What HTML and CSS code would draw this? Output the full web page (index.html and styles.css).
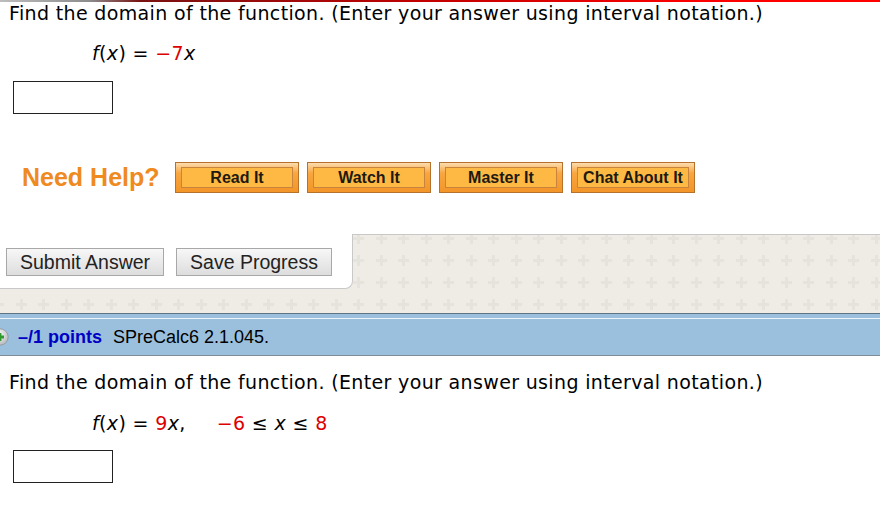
FILE: index.html
```html
<!DOCTYPE html>
<html lang="en">
<head>
  <meta charset="UTF-8">
  <title>Domain of a Function</title>
  <link rel="stylesheet" href="styles.css">
</head>
<body>
  <div class="top-bar"></div>

  <div class="question">
    <p class="prompt">Find the domain of the function. (Enter your answer using interval notation.)</p>
    <p class="formula"><i>f</i>(<i>x</i>) = <span class="red">&minus;7</span><i>x</i></p>
    <input class="answer-box" type="text">
  </div>

  <div class="help">
    <span class="help-label">Need Help?</span>
    <div class="help-buttons">
      <button class="help-btn"><span>Read It</span></button>
      <button class="help-btn"><span>Watch It</span></button>
      <button class="help-btn"><span>Master It</span></button>
      <button class="help-btn"><span>Chat About It</span></button>
    </div>
  </div>

  <div class="band">
    <div class="actions">
      <button class="gray-btn">Submit Answer</button>
      <button class="gray-btn">Save Progress</button>
    </div>
  </div>

  <div class="q-bar">
    <div class="q-bar-inner">
      <svg class="q-icon" width="18" height="18" viewBox="0 0 18 18">
        <defs>
          <radialGradient id="ball" cx="40%" cy="35%" r="65%">
            <stop offset="0" stop-color="#ffffff"/>
            <stop offset="1" stop-color="#b9bcbf"/>
          </radialGradient>
        </defs>
        <circle cx="9" cy="9" r="8.2" fill="url(#ball)" stroke="#8e9499" stroke-width="0.8"/>
        <path d="M7.6 5h2.8v2.6H13v2.8h-2.6V13H7.6v-2.6H5V7.6h2.6z" fill="#2f9a2f"/>
      </svg>
      <span class="points">&ndash;/1 points</span>
      <span class="q-ref">SPreCalc6 2.1.045.</span>
    </div>
  </div>

  <div class="question second">
    <p class="prompt">Find the domain of the function. (Enter your answer using interval notation.)</p>
    <p class="formula"><i>f</i>(<i>x</i>) = <span class="red">9</span><i>x</i>,<span class="range"><span class="red">&minus;6</span> &le; <i>x</i> &le; <span class="red">8</span></span></p>
    <input class="answer-box" type="text">
  </div>
</body>
</html>
```

FILE: styles.css
```css
:root {
  --text: #000;
  --red: #dd0000;
  --orange: #ef8a1e;
  --beige: #efece6;
  --blue: #9bc0de;
}
body {
  margin: 0;
  font-family: "DejaVu Sans", Verdana, sans-serif;
  color: var(--text);
  background: #fff;
}
.top-bar {
  height: 2px;
  background: linear-gradient(90deg, #bdbdbd 0, #8c8c8c 90px, #7a1212 140px, #c20000 420px, #ff0000 700px);
}
.question {
  padding-left: 9px;
}
.prompt {
  margin: 0;
  font-size: 19px;
  line-height: 22px;
  letter-spacing: 0.35px;
}
.formula {
  margin: 18px 0 0 83px;
  font-size: 19px;
  line-height: 22px;
  letter-spacing: 0.35px;
}
.range {
  margin-left: 31px;
}
.red {
  color: var(--red);
}
.answer-box {
  display: block;
  box-sizing: border-box;
  width: 100px;
  height: 33px;
  margin: 17px 0 0 4px;
  border: 1px solid #222;
  padding: 0;
}
.second .prompt {
  margin-top: 15px;
}
.second .formula {
  margin-top: 19px;
}
.second .answer-box {
  margin-top: 16px;
}

/* help row */
.help {
  display: flex;
  align-items: center;
  margin-top: 48px;
  padding-left: 22px;
}
.help-label {
  width: 153px;
  font-family: "Liberation Sans", Arial, sans-serif;
  font-weight: bold;
  font-size: 25px;
  color: var(--orange);
}
.help-buttons {
  display: flex;
  gap: 8px;
}
.help-btn {
  box-sizing: border-box;
  width: 124px;
  height: 31px;
  padding: 4px 5px;
  border: 1px solid #b4722c;
  background: linear-gradient(#fddcae, #f8a640 35%, #f39528);
  cursor: pointer;
}
.help-btn span {
  display: block;
  height: 100%;
  box-sizing: border-box;
  border: 1px solid #c8843c;
  background: #fdb943;
  font-family: "Liberation Sans", Arial, sans-serif;
  font-weight: bold;
  font-size: 16px;
  line-height: 19px;
  color: #1e1a12;
  white-space: nowrap;
}

/* submit band */
.band {
  margin-top: 41px;
  height: 78px;
  border-top: 1px solid #c8c8c8;
  background-color: var(--beige);
  background-image: url("data:image/svg+xml,%3Csvg xmlns='http://www.w3.org/2000/svg' width='22.5' height='22'%3E%3Cpath d='M9.8 6h3v4h4v3h-4v4h-3v-4h-4v-3h4z' fill='%23e6e2dc'/%3E%3C/svg%3E");
  background-size: 22.5px 22px;
  background-position: 10px -8px;
}
.actions {
  display: flex;
  gap: 12px;
  box-sizing: border-box;
  width: 353px;
  height: 55px;
  margin-top: -1px;
  padding: 14px 0 0 6px;
  background: #fff;
  border-right: 1px solid #c8c8c8;
  border-bottom: 1px solid #c8c8c8;
  border-bottom-right-radius: 8px;
}
.gray-btn {
  height: 28px;
  padding: 0 13px;
  border: 1px solid #a8a8a8;
  background: linear-gradient(#f7f7f7, #dddddd);
  font-family: "Liberation Sans", Arial, sans-serif;
  font-size: 19.5px;
  color: #222;
  cursor: pointer;
}

/* question header */
.q-bar {
  border-top: 1px solid #5f7587;
  background: var(--blue);
  padding-top: 4px;
}
.q-bar-inner {
  display: flex;
  align-items: center;
  height: 36px;
  border-top: 1px solid #eef4fa;
  border-bottom: 1px solid #7d8d9b;
  font-family: "Liberation Sans", Arial, sans-serif;
}
.q-icon {
  margin-left: -9px;
  margin-right: 9px;
}
.points {
  font-weight: bold;
  font-size: 18px;
  color: #0000c4;
  margin-right: 11px;
}
.q-ref {
  font-size: 18px;
  color: #000;
}
```
